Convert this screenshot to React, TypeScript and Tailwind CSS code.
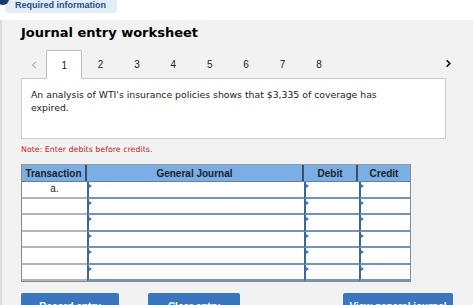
import { ChevronLeft, ChevronRight } from 'lucide-react'

const tabs = [1, 2, 3, 4, 5, 6, 7, 8]
const rows = ['a.', '', '', '', '', '']

function InputCell({ className }: { className: string }) {
    return (
        <div className={`relative h-full bg-white border-l-2 border-l-[#3b68a3] border-b-2 border-b-[#6f93c2] ${className}`}>
            <span className="absolute left-0 top-[2px] w-0 h-0 border-y-[2px] border-y-transparent border-l-[3px] border-l-[#3b78c4]" />
        </div>
    )
}

export default function App() {
    return (
        <div className="w-[473px] h-[305px] overflow-hidden bg-white font-['Liberation_Sans',Arial,sans-serif] text-[#222]">
            <div className="relative h-5">
                <div className="absolute left-[5px] top-0 w-[112px] h-[13px] bg-[#e3edf7] rounded-b-[4px] pl-[10px] text-[9px] font-bold leading-[10px] text-[#1d4f8c]">
                    Required information
                </div>
                <div className="absolute left-[-3px] top-[-7px] w-3 h-3 rounded-full bg-[#173b6b]" />
            </div>

            <div className="h-[285px] bg-[#f2f2f2] border-l-2 border-[#dddddd] pl-[19px]">
                <h1 className="pt-[5px] h-[30px] font-['DejaVu_Sans',Verdana,sans-serif] text-[13px] font-bold leading-[16px] text-black">
                    Journal entry worksheet
                </h1>

                <div className="flex items-stretch h-[28px]">
                    <div className="w-[25px] flex items-center justify-center pt-[2px]">
                        <ChevronLeft className="w-3 h-3 text-[#8a8a8a]" strokeWidth={2} />
                    </div>
                    {tabs.map((n) => (
                        <div
                            key={n}
                            className={`w-[36.4px] flex items-center justify-center text-[10px] ${
                                n === 1 ? 'bg-white border border-b-0 border-[#bdbdbd] relative z-10 h-[29px]' : ''
                            }`}
                        >
                            {n}
                        </div>
                    ))}
                    <div className="flex-1" />
                    <div className="w-[30px] flex items-center justify-start pb-[2px]">
                        <ChevronRight className="w-[11px] h-[11px] text-black" strokeWidth={3.5} />
                    </div>
                </div>

                <div className="w-[425px] h-[61px] bg-white border border-[#cccccc] px-[9px] pt-[9px] font-['DejaVu_Sans',Verdana,sans-serif] text-[9.3px] leading-[13px] text-[#222]">
                    An analysis of WTI's insurance policies shows that $3,335 of coverage has
                    <br />
                    expired.
                </div>

                <p className="mt-[6px] h-[19px] font-['DejaVu_Sans',Verdana,sans-serif] text-[7.9px] leading-[10px] text-[#c0272d]">
                    Note: Enter debits before credits.
                </p>

                <div className="w-[390px] border border-[#8a8a8a] border-t-[#9a9a9a]">
                    <div className="flex h-[17px] bg-[#7aaee6] text-[10px] font-bold leading-[17px] text-[#222] border-b border-[#6a7f98]">
                        <div className="w-[65px] text-center border-r-2 border-[#3f4f63]">Transaction</div>
                        <div className="w-[217px] text-center border-r-2 border-[#3f4f63]">General Journal</div>
                        <div className="w-[54px] text-center border-r-2 border-[#3f4f63]">Debit</div>
                        <div className="flex-1 text-center">Credit</div>
                    </div>
                    {rows.map((r, i) => (
                        <div key={i} className="flex h-[16.5px]">
                            <div className="w-[65px] bg-white text-center text-[10px] leading-[14px] border-b-2 border-[#b5b5b5]">
                                {r}
                            </div>
                            <InputCell className="w-[217px]" />
                            <InputCell className="w-[55px]" />
                            <InputCell className="flex-1" />
                        </div>
                    ))}
                </div>

                <div className="flex mt-[11px] text-[10px] font-bold text-white">
                    <div className="w-[98px] h-[22px] bg-[#3a76bd] rounded-t-[2px] text-center pt-[6px]">Record entry</div>
                    <div className="ml-[29px] w-[92px] h-[22px] bg-[#3a76bd] rounded-t-[2px] text-center pt-[6px]">Clear entry</div>
                    <div className="ml-[103px] w-[110px] h-[22px] bg-[#3a76bd] rounded-t-[2px] text-center pt-[6px]">View general journal</div>
                </div>
            </div>
        </div>
    )
}
